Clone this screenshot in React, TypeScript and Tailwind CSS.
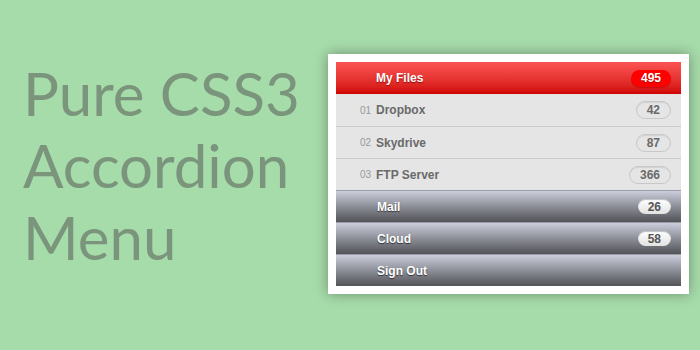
import React from "react";

type Item = { num?: string; label: string; count?: number };

const subItems: Item[] = [
  { num: "01", label: "Dropbox", count: 42 },
  { num: "02", label: "Skydrive", count: 87 },
  { num: "03", label: "FTP Server", count: 366 },
];

const mainItems: Item[] = [
  { label: "Mail", count: 26 },
  { label: "Cloud", count: 58 },
  { label: "Sign Out" },
];

function DarkRow({ item }: { item: Item }) {
  return (
    <div className="flex h-[32px] items-center bg-gradient-to-b from-[#cbcedb] to-[#535459] pr-[10px] border-t border-[#9a9ca6]">
      <span className="pl-[41px] text-[12px] font-bold text-white [text-shadow:0_1px_1px_rgba(0,0,0,0.6)]">
        {item.label}
      </span>
      {item.count !== undefined && (
        <span className="ml-auto flex h-[15px] items-center rounded-full bg-gradient-to-b from-[#ffffff] to-[#e2e2e2] px-[10px] text-[12px] font-bold text-[#555] shadow-[inset_0_1px_1px_rgba(0,0,0,0.25)]">
          {item.count}
        </span>
      )}
    </div>
  );
}

export default function App() {
  return (
    <div className="flex h-[350px] w-[700px] items-start overflow-hidden bg-[#a6dbaa]">
      {/* Heading */}
      <h1 className="mt-[57px] w-[328px] shrink-0 pl-[23px] font-['Lato',sans-serif] text-[60px] font-normal leading-[72px] text-[#7a957c]">
        Pure CSS3
        <br />
        Accordion
        <br />
        Menu
      </h1>

      {/* Menu panel */}
      <div className="mt-[54px] w-[361px] shrink-0 bg-white p-[8px] shadow-[0_0_12px_rgba(0,0,0,0.35)]">
        <div className="font-['Liberation_Sans',Arial,sans-serif]">
          <div className="flex h-[32px] items-center bg-gradient-to-b from-[#fc5353] to-[#d10000] pr-[10px]">
            <span className="pl-[40px] text-[12px] font-bold text-white [text-shadow:0_1px_1px_rgba(120,0,0,0.7)]">
              My Files
            </span>
            <span className="ml-auto flex h-[17px] items-center rounded-full bg-[#ff0000] px-[10px] text-[12px] font-bold text-white shadow-[0_1px_1px_rgba(150,0,0,0.4)] [text-shadow:0_1px_1px_rgba(120,0,0,0.6)]">
              495
            </span>
          </div>

          {subItems.map((item, i) => (
            <div
              key={item.label}
              className={
                "flex h-[32px] items-center bg-[#e5e5e5] pr-[10px] " +
                (i > 0 ? "border-t border-[#c9c9c9]" : "")
              }
            >
              <span className="w-[40px] pr-[5px] text-right text-[10px] text-[#999]">{item.num}</span>
              <span className="text-[12px] font-bold text-[#6a6a6a]">{item.label}</span>
              <span className="ml-auto flex h-[18px] items-center rounded-full border border-[#c8c8c8] px-[10px] text-[12px] font-bold text-[#6a6a6a] shadow-[inset_0_1px_1px_rgba(0,0,0,0.08)]">
                {item.count}
              </span>
            </div>
          ))}

          {mainItems.map((item) => (
            <DarkRow key={item.label} item={item} />
          ))}
        </div>
      </div>
    </div>
  );
}
